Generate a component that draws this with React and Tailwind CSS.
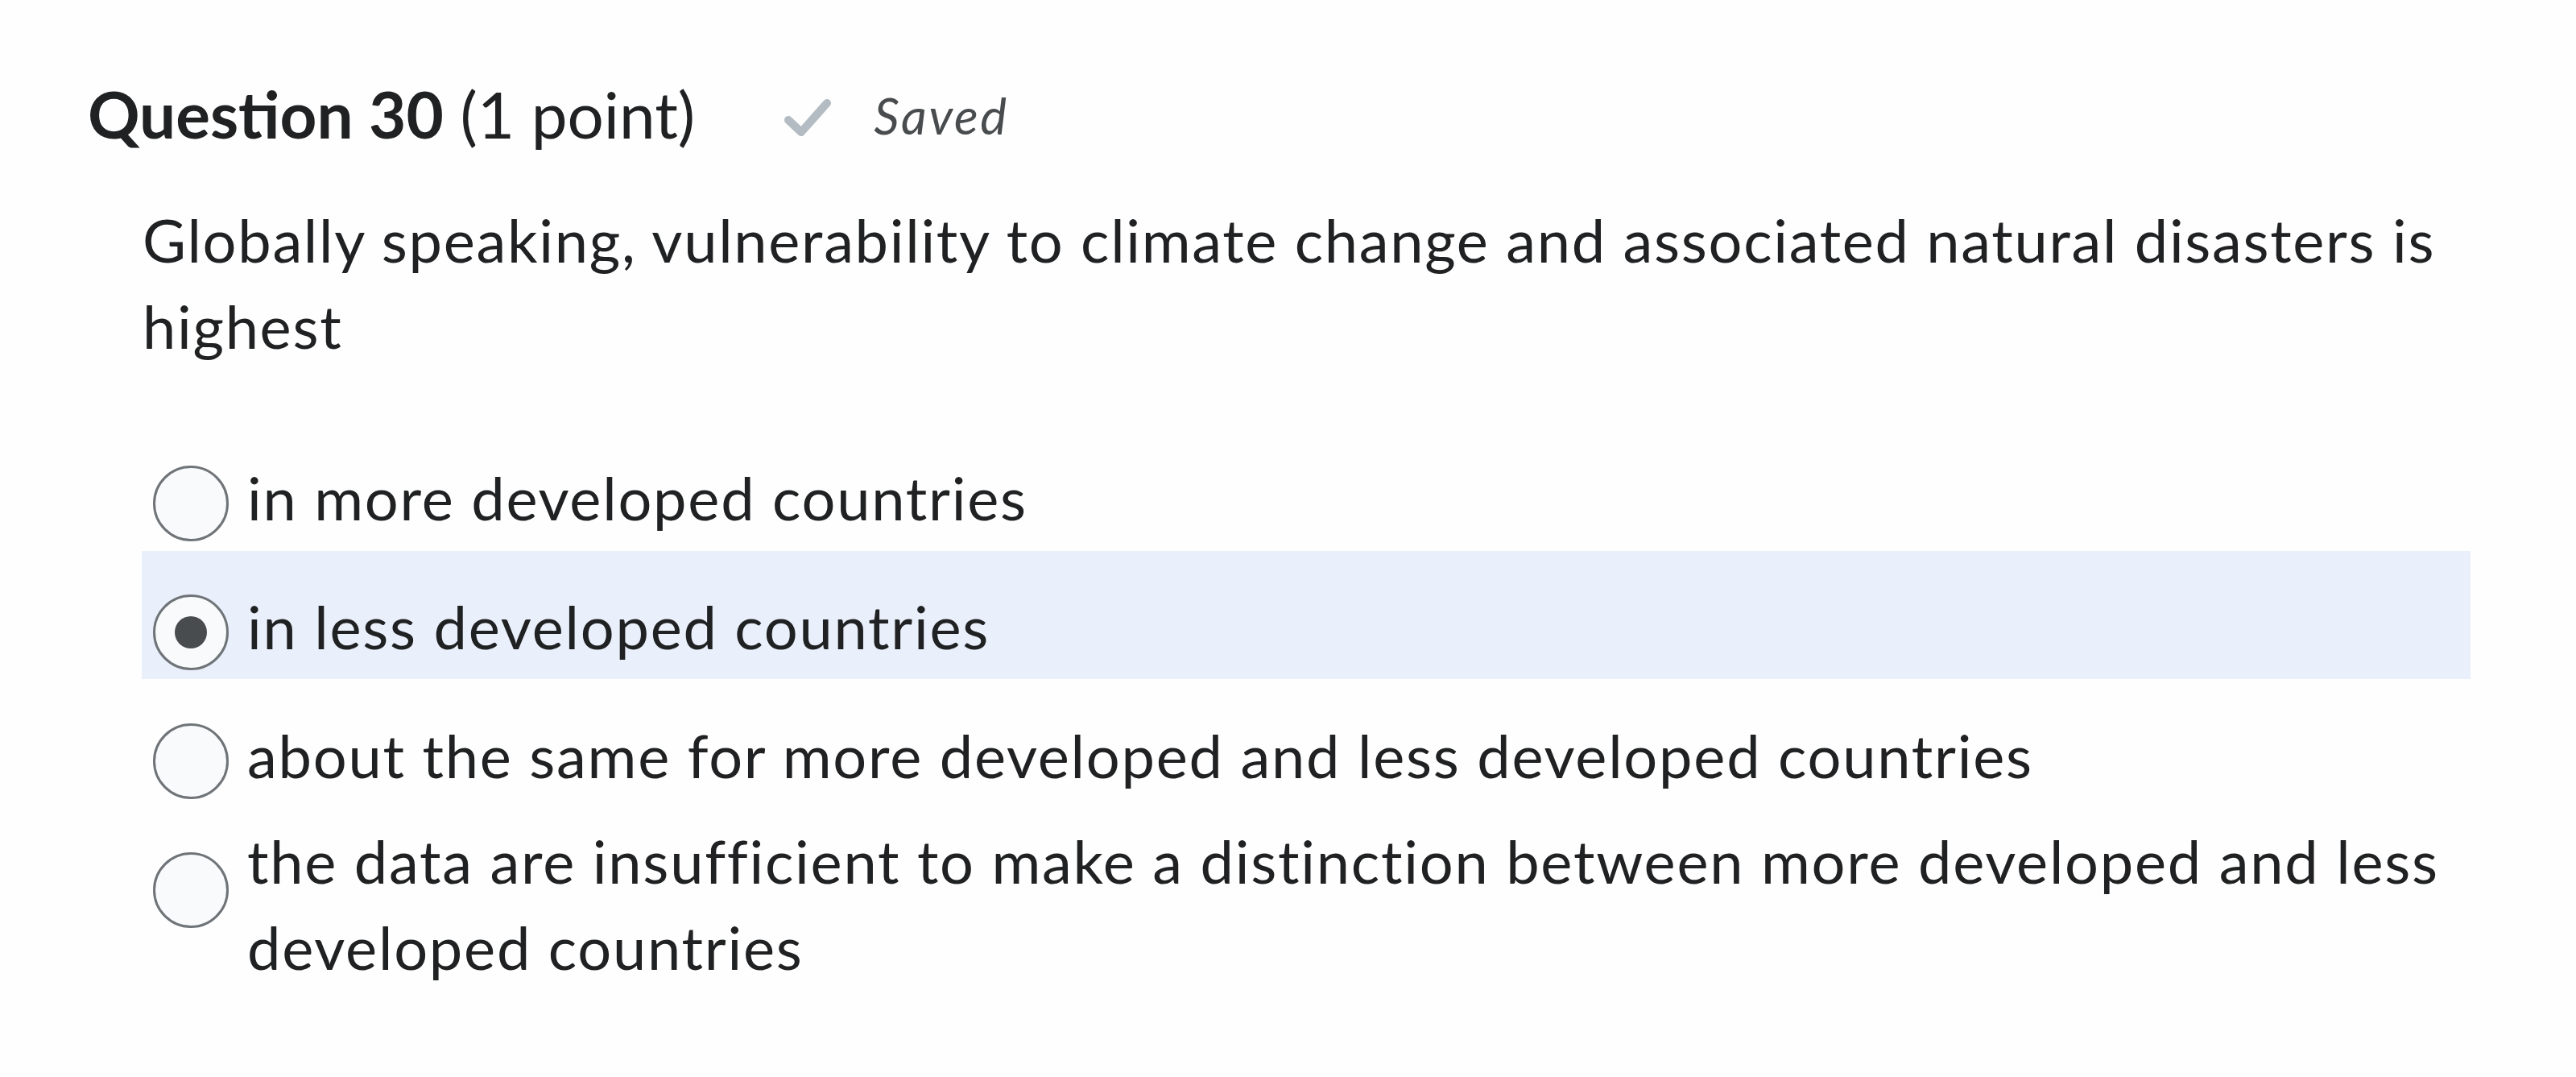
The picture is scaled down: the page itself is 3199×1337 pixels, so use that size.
import React from "react";

function Radio({ checked }) {
  return (
    <div className="w-[94px] h-[94px] shrink-0 rounded-full border-[3px] border-[#6f7478] bg-[#f9fafb] flex items-center justify-center">
      {checked && <div className="w-[40px] h-[40px] rounded-full bg-[#494c4e]" />}
    </div>
  );
}

function Option({ text, checked, rowClass, circleClass }) {
  return (
    <div className={`flex items-start pl-[14px] pr-[20px] ${rowClass} ${checked ? "bg-[#e9effb]" : ""}`}>
      <div className={circleClass}>
        <Radio checked={checked} />
      </div>
      <div className="ml-[23px] leading-[107px]">{text}</div>
    </div>
  );
}

export default function App() {
  return (
    <div
      className="w-full h-[1337px] bg-[#fefefe] text-[#202122] overflow-hidden"
      style={{ fontFamily: "Lato, 'Noto Sans', sans-serif" }}
    >
      <div className="flex items-center pl-[109px] pt-[93px]">
        <div className="text-[80px] leading-[96px] whitespace-nowrap">
          <span className="font-bold">Question 30</span> <span>(1 point)</span>
        </div>
        <svg
          className="ml-[111px] mt-[10px]"
          width="58"
          height="46"
          viewBox="0 0 58 46"
          fill="none"
        >
          <path
            d="M5 26 L21 41 L53 5"
            stroke="#b3bcc2"
            strokeWidth="10"
            strokeLinecap="round"
            strokeLinejoin="round"
          />
        </svg>
        <span className="ml-[53px] mt-[4px] italic text-[62px] leading-[74px] tracking-[2.6px] text-[#494c4e]">Saved</span>
      </div>

      <div className="mt-[55px] pl-[177px] pr-[131px] text-[74px] leading-[107px] tracking-[1.7px]">
        Globally speaking, vulnerability to climate change and associated natural disasters is highest
      </div>

      <div className="mt-[66px] ml-[176px] mr-[131px] text-[74px] tracking-[1.75px] flex flex-col">
        <Option
          text="in more developed countries"
          rowClass="h-[160px] pt-[40px]"
          circleClass="mt-[14px]"
        />
        <Option
          text="in less developed countries"
          checked
          rowClass="h-[159px] pt-[40px]"
          circleClass="mt-[14px]"
        />
        <Option
          text="about the same for more developed and less developed countries"
          rowClass="h-[160px] pt-[41px]"
          circleClass="mt-[14px]"
        />
        <Option
          text="the data are insufficient to make a distinction between more developed and less developed countries"
          rowClass="pt-[12px]"
          circleClass="mt-[43px]"
        />
      </div>
    </div>
  );
}
